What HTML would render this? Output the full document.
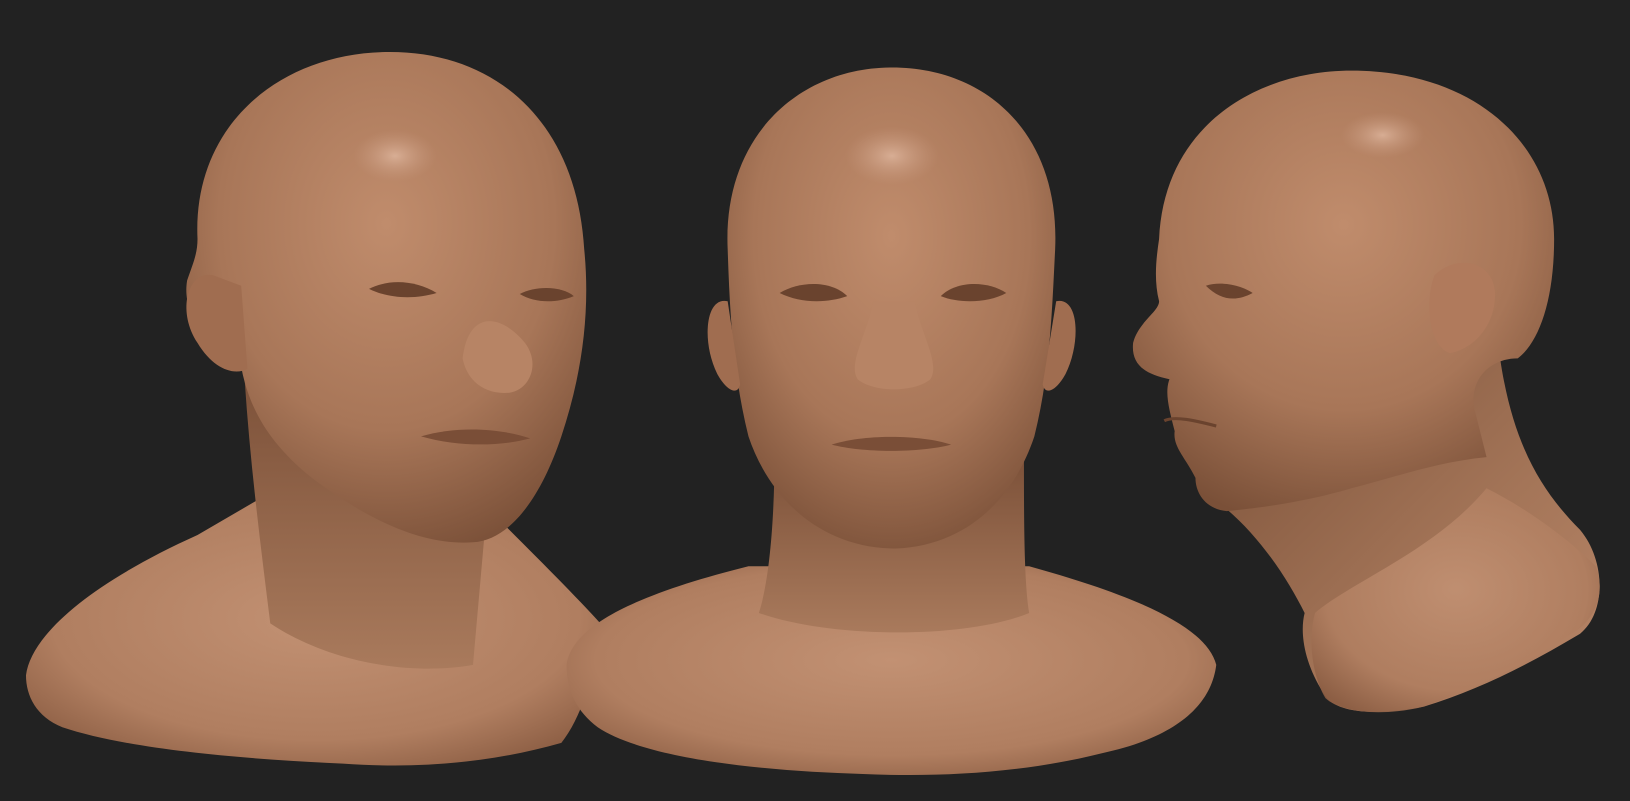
<!DOCTYPE html>
<html><head><meta charset="utf-8"><style>
html,body{margin:0;padding:0;background:#222222;width:1630px;height:801px;overflow:hidden}
svg{display:block}
</style></head><body>
<svg width="1630" height="801" viewBox="0 0 1568 771" preserveAspectRatio="none" xmlns="http://www.w3.org/2000/svg">
<defs>
<radialGradient id="sk" cx="0.5" cy="0.35" r="0.7">
<stop offset="0" stop-color="#c08c6c"/><stop offset="0.6" stop-color="#a87658"/><stop offset="1" stop-color="#7a5038"/>
</radialGradient>
<radialGradient id="bust" cx="0.5" cy="0.45" r="0.65">
<stop offset="0" stop-color="#c29173"/><stop offset="0.7" stop-color="#b07e60"/><stop offset="1" stop-color="#8a5c42"/>
</radialGradient>
<linearGradient id="neck" x1="0" y1="0" x2="0" y2="1">
<stop offset="0" stop-color="#7c5139"/><stop offset="1" stop-color="#a97a5c"/>
</linearGradient>
<linearGradient id="neck3" x1="0" y1="0" x2="1" y2="1">
<stop offset="0" stop-color="#7a5038"/><stop offset="0.6" stop-color="#a47558"/><stop offset="1" stop-color="#b88668"/>
</linearGradient>
<radialGradient id="hl" cx="0.5" cy="0.5" r="0.5">
<stop offset="0" stop-color="#e0b8a0" stop-opacity="0.8"/><stop offset="1" stop-color="#c89a80" stop-opacity="0"/>
</radialGradient>
</defs>
<rect width="1568" height="771" fill="#222222"/>

<!-- HEAD 1 -->
<path d="M25,650 C30,610 90,560 190,515 L250,480 L480,500 C520,540 560,580 582,605 C570,650 560,690 540,715 C470,735 400,740 330,735 C220,730 120,720 60,700 C35,690 25,670 25,650 Z" fill="url(#bust)"/>
<path d="M235,360 L470,470 L455,640 C400,650 320,640 260,600 C250,520 240,440 235,360 Z" fill="url(#neck)"/>
<path d="M190,230 C185,120 270,50 375,50 C480,50 555,120 562,240 C568,300 560,360 540,420 C520,480 490,520 455,522 C410,525 360,505 300,460 C250,420 235,380 230,340 C195,330 175,300 180,270 C185,255 190,245 190,230 Z" fill="url(#sk)"/>
<path d="M205,265 C180,260 170,300 190,330 C205,355 225,362 238,355 L232,275 Z" fill="#a06d50"/>
<ellipse cx="380" cy="150" rx="40" ry="25" fill="url(#hl)"/>
<path d="M355,278 C375,268 400,270 420,282 C400,288 375,288 355,278 Z" fill="#6a432e"/>
<path d="M500,283 C515,275 540,275 552,285 C535,292 515,292 500,283 Z" fill="#6a432e"/>
<path d="M445,345 C450,300 480,300 505,330 C520,350 510,375 490,378 C470,380 450,370 445,345 Z" fill="#b78465"/>
<path d="M405,420 C440,410 480,412 510,422 C480,430 440,430 405,420 Z" fill="#7a4e37"/>

<!-- HEAD 2 -->
<path d="M545,640 C550,600 620,570 720,545 L990,545 C1080,570 1160,600 1170,640 C1165,680 1130,710 1060,725 C980,745 900,748 830,745 C730,742 620,730 575,700 C555,685 545,665 545,640 Z" fill="url(#bust)"/>
<path d="M745,440 C745,500 740,560 730,590 C800,615 930,615 990,590 C985,560 985,500 985,440 Z" fill="url(#neck)"/>
<path d="M700,240 C695,130 770,65 858,65 C950,65 1020,130 1015,240 C1012,300 1010,360 995,420 C975,480 930,525 862,528 C790,528 740,480 720,420 C705,360 702,300 700,240 Z" fill="url(#sk)"/>
<path d="M700,290 C678,285 675,330 690,360 C700,378 710,380 712,370 Z" fill="#a06d50"/>
<path d="M1016,290 C1038,285 1040,330 1025,360 C1015,378 1005,380 1003,370 Z" fill="#a06d50"/>
<ellipse cx="858" cy="150" rx="45" ry="28" fill="url(#hl)"/>
<path d="M750,282 C770,270 800,270 815,285 C795,292 770,292 750,282 Z" fill="#6a432e"/>
<path d="M905,285 C920,270 950,270 968,282 C950,292 922,292 905,285 Z" fill="#6a432e"/>
<path d="M840,290 C835,320 815,350 825,365 C840,378 880,378 895,365 C905,350 885,320 880,290 Z" fill="#b78465"/>
<path d="M800,428 C830,418 885,418 915,428 C885,436 830,436 800,428 Z" fill="#7a4e37"/>

<!-- HEAD 3 -->
<path d="M1180,490 L1440,320 C1450,420 1480,470 1520,510 C1545,540 1545,590 1520,610 C1470,640 1420,665 1370,680 C1320,690 1285,685 1275,670 C1255,640 1250,610 1255,590 C1240,560 1215,520 1180,490 Z" fill="url(#neck3)"/>
<path d="M1265,590 C1300,560 1380,530 1430,470 C1470,490 1510,520 1535,545 C1545,570 1535,595 1515,608 C1470,638 1420,662 1370,680 C1330,690 1290,686 1275,672 C1262,650 1258,615 1265,590 Z" fill="url(#bust)" opacity="0.9"/>
<path d="M1115,230 C1120,120 1210,68 1300,68 C1420,68 1495,140 1495,230 C1495,290 1480,330 1460,345 C1430,345 1410,370 1420,400 L1430,440 C1380,445 1340,460 1300,470 C1250,485 1200,490 1180,492 C1160,490 1150,475 1150,460 C1140,440 1128,430 1130,415 C1125,395 1120,378 1125,365 C1100,360 1088,350 1090,330 C1095,310 1115,300 1115,290 C1110,270 1112,250 1115,230 Z" fill="url(#sk)"/>
<path d="M1380,265 C1400,245 1435,250 1438,280 C1440,310 1420,335 1395,340 C1375,335 1370,290 1380,265 Z" fill="#b07a5c"/>
<ellipse cx="1330" cy="130" rx="40" ry="22" fill="url(#hl)"/>
<path d="M1160,275 C1175,270 1195,275 1205,282 C1190,290 1175,290 1160,275 Z" fill="#6a432e"/>
<path d="M1120,405 C1130,400 1150,405 1170,410" stroke="#6a432e" stroke-width="3" fill="none"/>
</svg>
</body></html>
